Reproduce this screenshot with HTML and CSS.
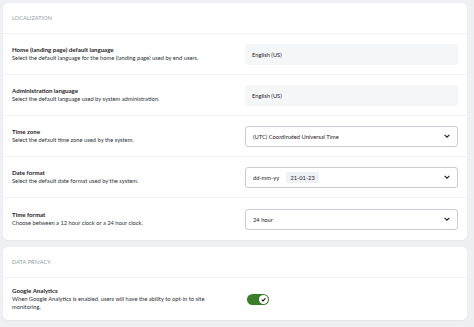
FILE: index.html
```html
<!DOCTYPE html>
<html lang="en">
<head>
  <meta charset="UTF-8">
  <title>Settings</title>
  <meta name="viewport" content="width=device-width, initial-scale=1.0">
  <link rel="stylesheet" href="styles.css">
</head>
<body>
  <div class="card">
    <div class="card-head">LOCALIZATION</div>

    <div class="row">
      <div class="label">
        <div class="title">Home (landing page) default language</div>
        <div class="desc">Select the default language for the home (landing page) used by end users.</div>
      </div>
      <div class="field readonly">English (US)</div>
    </div>

    <div class="row">
      <div class="label">
        <div class="title">Administration language</div>
        <div class="desc">Select the default language used by system administration.</div>
      </div>
      <div class="field readonly">English (US)</div>
    </div>

    <div class="row">
      <div class="label">
        <div class="title">Time zone</div>
        <div class="desc">Select the default time zone used by the system.</div>
      </div>
      <div class="field select">
        <span>(UTC) Coordinated Universal Time</span>
        <svg class="chev" viewBox="0 0 10 6"><path d="M1 1l4 4 4-4" /></svg>
      </div>
    </div>

    <div class="row">
      <div class="label">
        <div class="title">Date format</div>
        <div class="desc">Select the default date format used by the system.</div>
      </div>
      <div class="field select">
        <span>dd-mm-yy <span class="sample">21-01-23</span></span>
        <svg class="chev" viewBox="0 0 10 6"><path d="M1 1l4 4 4-4" /></svg>
      </div>
    </div>

    <div class="row last">
      <div class="label">
        <div class="title">Time format</div>
        <div class="desc">Choose between a 12 hour clock or a 24 hour clock.</div>
      </div>
      <div class="field select">
        <span>24 hour</span>
        <svg class="chev" viewBox="0 0 10 6"><path d="M1 1l4 4 4-4" /></svg>
      </div>
    </div>
  </div>

  <div class="card">
    <div class="card-head">DATA PRIVACY</div>

    <div class="row last">
      <div class="label">
        <div class="title">Google Analytics</div>
        <div class="desc">When Google Analytics is enabled, users will have the ability to opt-in to site monitoring.</div>
      </div>
      <div class="toggle-wrap">
        <div class="toggle">
          <div class="knob">
            <svg viewBox="0 0 10 10"><path d="M2.5 5.2l1.8 1.8 3.4-3.6" /></svg>
          </div>
        </div>
      </div>
    </div>
  </div>
</body>
</html>
```

FILE: styles.css
```css
body {
  margin: 0;
  padding: 3px 7px 0 3px;
  background: #eef0f3;
  font-family: Lato, "Open Sans", sans-serif;
  color: #1f2328;
}

.card {
  background: #fff;
  border-radius: 5px;
  box-shadow: 0 1px 2px rgba(0, 0, 0, 0.05);
  margin-bottom: 7px;
}

.card-head {
  height: 30px;
  display: flex;
  align-items: center;
  padding-left: 9px;
  font-size: 5.5px;
  color: #8d9a9c;
  letter-spacing: 0.1px;
  border-bottom: 1px solid #f0f1f3;
}

.row {
  height: 40px;
  display: flex;
  align-items: center;
  padding: 0 9px;
  border-bottom: 1px solid #f0f1f3;
}

.row.last {
  height: 42px;
  border-bottom: none;
}

.label {
  flex: 1;
  padding-right: 30px;
}

.title {
  font-size: 6.1px;
  font-weight: 700;
  line-height: 8px;
}

.desc {
  font-size: 5.75px;
  line-height: 8px;
  color: #2d3236;
}

.field {
  width: 213px;
  height: 21px;
  box-sizing: border-box;
  display: flex;
  align-items: center;
  justify-content: space-between;
  padding: 0 7px;
  font-size: 5.75px;
  border-radius: 3px;
  margin-right: 0;
}

.readonly {
  background: #f5f6f8;
}

.select {
  border: 1px solid #c9ccd1;
}

.sample {
  background: #eef2f7;
  border-radius: 2px;
  padding: 2px 4px;
  margin-left: 6px;
}

.chev {
  width: 6px;
  height: 4px;
  fill: none;
  stroke: #1f2328;
  stroke-width: 1.8;
}

.toggle-wrap {
  width: 213px;
}

.toggle {
  width: 22px;
  height: 11px;
  margin-left: 2px;
  border-radius: 6px;
  background: #3b7d2b;
  display: flex;
  justify-content: flex-end;
  align-items: center;
  padding: 0 1px;
  box-sizing: border-box;
}

.knob {
  width: 9px;
  height: 9px;
  border-radius: 50%;
  background: #fff;
  display: flex;
  align-items: center;
  justify-content: center;
}

.knob svg {
  width: 7px;
  height: 7px;
  fill: none;
  stroke: #111;
  stroke-width: 1.6;
}
```
